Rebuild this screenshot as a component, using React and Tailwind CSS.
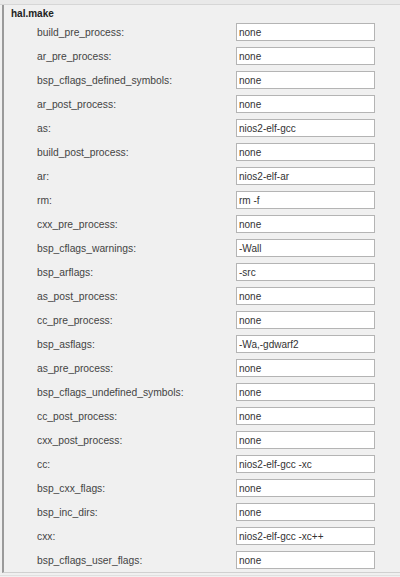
import React from 'react';

const rows = [
  ['build_pre_process:', 'none'],
  ['ar_pre_process:', 'none'],
  ['bsp_cflags_defined_symbols:', 'none'],
  ['ar_post_process:', 'none'],
  ['as:', 'nios2-elf-gcc'],
  ['build_post_process:', 'none'],
  ['ar:', 'nios2-elf-ar'],
  ['rm:', 'rm -f'],
  ['cxx_pre_process:', 'none'],
  ['bsp_cflags_warnings:', '-Wall'],
  ['bsp_arflags:', '-src'],
  ['as_post_process:', 'none'],
  ['cc_pre_process:', 'none'],
  ['bsp_asflags:', '-Wa,-gdwarf2'],
  ['as_pre_process:', 'none'],
  ['bsp_cflags_undefined_symbols:', 'none'],
  ['cc_post_process:', 'none'],
  ['cxx_post_process:', 'none'],
  ['cc:', 'nios2-elf-gcc -xc'],
  ['bsp_cxx_flags:', 'none'],
  ['bsp_inc_dirs:', 'none'],
  ['cxx:', 'nios2-elf-gcc -xc++'],
  ['bsp_cflags_user_flags:', 'none'],
];

function App() {
  return (
    <div className="w-[400px] h-[577px] overflow-hidden bg-[#f0f0f0] font-['Liberation_Sans',Arial,sans-serif] text-[#3a3a3a]">
      <div className="h-[4px] bg-[#e9e9e9]" />
      <div className="h-[1px] bg-[#d6d6d6]" />
      <div className="ml-[2px] h-[568px] border-l-2 border-[#9a9a9a] border-b border-b-[#d0d0d0] flex flex-col">
        <div className="h-[15px] pl-[7px] pt-[2px] text-[10px] leading-[13px] font-bold text-[#222]">hal.make</div>
        {rows.map(([label, value]) => (
          <div key={label} className="h-[24px] flex items-center">
            <div className="w-[232px] pl-[33px] text-[10.3px] leading-[13px] text-[#444]">{label}</div>
            <div className="w-[139px] h-[18px] bg-white border border-[#b4b4b4] px-[2px] flex items-center text-[10px] text-[#333]">
              {value}
            </div>
          </div>
        ))}
      </div>
      <div className="h-[1px] bg-[#e0e0e0] mt-[2px]" />
    </div>
  );
}

export default App;
